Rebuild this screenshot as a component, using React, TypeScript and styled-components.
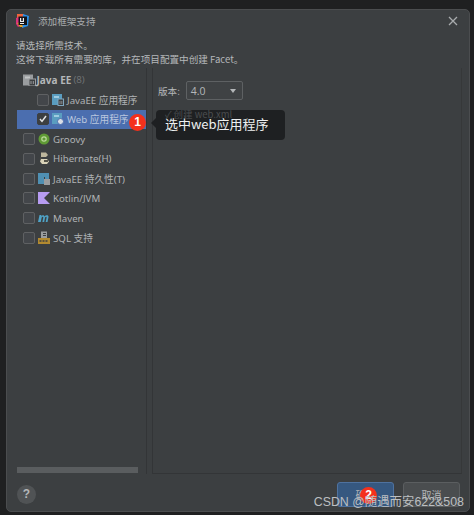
import React from "react";
import styled, { createGlobalStyle } from "styled-components";

const Global = createGlobalStyle`
  html, body { margin: 0; padding: 0; background: #1f2021; }
  body { width: 474px; height: 515px; overflow: hidden; font-family: "Noto Sans CJK SC", "Noto Sans", sans-serif; }
  #root { width: 474px; height: 515px; }
`;

const Page = styled.div`
  position: relative;
  width: 474px;
  height: 515px;
  padding: 9px 4px 3px 6px;
  box-sizing: border-box;
  overflow: hidden;
  background: #1f2021;
`;

const Dialog = styled.div`
  height: 100%;
  box-sizing: border-box;
  display: flex;
  flex-direction: column;
  background: #3c3f41;
  border: 1px solid #4b4d4f;
  border-radius: 5px;
  color: #b4b7b9;
`;

const TitleBar = styled.div`
  height: 22px;
  display: flex;
  align-items: center;
  padding: 0 11px 0 9px;
  gap: 9px;
  font-size: 9.6px;
  color: #a9acae;
  flex: none;
`;

const TitleText = styled.span`
  flex: 1;
`;

const Description = styled.div`
  margin: 6px 0 0 9px;
  font-size: 9.6px;
  line-height: 14px;
  color: #b4b7b9;
  height: 30px;
  flex: none;
`;

const Split = styled.div`
  height: 406px;
  margin: 0 7px 0 9px;
  display: flex;
  flex: none;
`;

const LeftPane = styled.div`
  width: 131px;
  flex: none;
  display: flex;
  flex-direction: column;
  justify-content: space-between;
  border-right: 1px solid #333537;
  padding: 2px 0 1px 1px;
  box-sizing: border-box;
`;

const Tree = styled.div`
  display: flex;
  flex-direction: column;
`;

const Row = styled.div<{ $indent: number; $selected?: boolean }>`
  height: 19.75px;
  display: flex;
  align-items: center;
  gap: 3px;
  padding-left: ${(p) => p.$indent}px;
  font-family: "Noto Sans", "Noto Sans CJK SC", sans-serif;
  font-size: 9.7px;
  white-space: nowrap;
  color: ${(p) => (p.$selected ? "#b9c6de" : "#b0b3b5")};
  background: ${(p) => (p.$selected ? "#4b6eaf" : "transparent")};
`;

const CheckBox = styled.span<{ $checked?: boolean }>`
  width: 10px;
  height: 10px;
  flex: none;
  border: 1px solid ${(p) => (p.$checked ? "#3c3f41" : "#5f6163")};
  border-radius: 2px;
  background: ${(p) => (p.$checked ? "#3c3f41" : "#43464a")};
  display: flex;
  align-items: center;
  justify-content: center;
`;

const GroupName = styled.b`
  color: #b4b7b9;
  font-family: "Open Sans", "Noto Sans CJK SC", sans-serif;
  font-size: 10px;
  margin-left: -2.5px;
`;

const Count = styled.span`
  color: #6f7274;
  margin-left: -1px;
`;

const Scrollbar = styled.div`
  width: 121px;
  height: 6px;
  background: #5a5d5f;
  flex: none;
`;

const Gutter = styled.div`
  width: 5px;
  flex: none;
`;

const RightPane = styled.div`
  flex: 1;
  border-left: 1px solid #333537;
  border-bottom: 1px solid #333537;
  border-right: 1px solid #363839;
  padding: 13px 0 0 5px;
  box-sizing: border-box;
`;

const VersionRow = styled.div`
  display: flex;
  align-items: center;
  gap: 6px;
  font-size: 9.6px;
`;

const Select = styled.div`
  width: 57px;
  height: 19px;
  box-sizing: border-box;
  border: 1px solid #5e6163;
  border-radius: 2px;
  background: #3f4244;
  padding: 0 6px 0 4px;
  display: flex;
  align-items: center;
  justify-content: space-between;
  font-size: 10.5px;
  font-family: "Open Sans", sans-serif;
`;

const Caret = styled.span`
  width: 0;
  height: 0;
  border-left: 3.5px solid transparent;
  border-right: 3.5px solid transparent;
  border-top: 4px solid #b4b7b9;
`;

const Footer = styled.div`
  flex: 1;
  display: flex;
  align-items: center;
  justify-content: space-between;
  padding: 3px 9px 0 10px;
`;

const Help = styled.div`
  width: 19px;
  height: 19px;
  border-radius: 50%;
  background: #505355;
  color: #b4b7b9;
  font: bold 12px "Liberation Sans", sans-serif;
  display: flex;
  align-items: center;
  justify-content: center;
`;

const Buttons = styled.div`
  display: flex;
  gap: 9px;
`;

const Button = styled.div<{ $primary?: boolean }>`
  width: 57px;
  height: 25px;
  box-sizing: border-box;
  border-radius: 3px;
  border: 1px solid ${(p) => (p.$primary ? "#4f729f" : "#5b5e60")};
  background: ${(p) => (p.$primary ? "#365880" : "#4a4d4f")};
  color: #b4b7b9;
  font-size: 10px;
  display: flex;
  align-items: center;
  justify-content: center;
`;

const Tooltip = styled.div`
  position: absolute;
  left: 156px;
  top: 110px;
  width: 129px;
  height: 30px;
  box-sizing: border-box;
  padding-left: 9px;
  border-radius: 4px;
  background: #1e2022;
  color: #eef0f1;
  font-size: 13px;
  line-height: 27px;
  white-space: nowrap;
`;

const TooltipArrow = styled.span`
  position: absolute;
  left: -5px;
  top: 8px;
  width: 0;
  height: 0;
  border-top: 5px solid transparent;
  border-bottom: 5px solid transparent;
  border-right: 5px solid #1e2022;
`;

const GhostText = styled.span`
  position: absolute;
  left: 9px;
  top: -9px;
  font-size: 9.5px;
  color: #4a4d4f;
`;

const Badge = styled.div<{ $x: number; $y: number }>`
  position: absolute;
  left: ${(p) => p.$x}px;
  top: ${(p) => p.$y}px;
  width: 17px;
  height: 17px;
  border-radius: 50%;
  background: #f4311c;
  color: #fff;
  font: bold 12px/17px "Liberation Sans", sans-serif;
  text-align: center;
`;

const Watermark = styled.div`
  position: absolute;
  right: 10px;
  bottom: 5px;
  font-size: 12.4px;
  line-height: 16px;
  color: #bcbfc1;
  font-family: "Liberation Sans", "Noto Sans CJK SC", sans-serif;
  white-space: nowrap;
`;

const CloseIcon = () => (
  <svg width="10" height="10" viewBox="0 0 10 10">
    <path d="M1 1l8 8M9 1l-8 8" stroke="#a9acae" strokeWidth="1.3" />
  </svg>
);

const AppLogo = () => (
  <svg width="13" height="14" viewBox="0 0 13 14">
    <path d="M1 0h7v5H1z" fill="#f0643c" />
    <path d="M0 4l3-1 1 9-2 1-2-3z" fill="#d8337a" />
    <path d="M7 0l6 2-1 10-6 2z" fill="#2b8fe6" />
    <path d="M1 9l3 4h3l-2-5z" fill="#e8a020" />
    <rect x="2.500" y="2.500" width="8.500" height="8.500" fill="#12141a" />
    <rect x="4" y="9" width="4" height="1" fill="#eee" />
    <path d="M4 4h1.200v3h1.600V4H8v4H4z" fill="#eee" />
  </svg>
);

const Check = () => (
  <svg width="8" height="8" viewBox="0 0 8 8">
    <path d="M1 4l2 2.400L7 1" fill="none" stroke="#e4e6e7" strokeWidth="1.500" />
  </svg>
);

const FolderIcon = () => (
  <svg width="13" height="12" viewBox="0 0 13 12">
    <path d="M0 0.500h10v11H0z" fill="#9a9d9f" />
    <path d="M2 2.500h5v2H2z" fill="#c3c5c6" />
    <rect x="6" y="5" width="6.500" height="7" fill="#3c3f41" stroke="#9a9d9f" />
    <path d="M8 7v3M10.300 7v3" stroke="#9a9d9f" />
  </svg>
);

const AppIcon = ({ web }: { web?: boolean }) => (
  <svg width="12" height="12" viewBox="0 0 12 12">
    <path d="M0 0h10v11H0z" fill="#5a9dc0" />
    <path d="M2 2h5v2H2z" fill="#9fcbe0" />
    {web ? (
      <circle cx="8.500" cy="8.500" r="3" fill="#d9dee6" stroke="#4b6eaf" />
    ) : (
      <>
        <rect x="6" y="5" width="5.500" height="6.500" fill="#3c3f41" stroke="#7fa6bd" />
        <path d="M8 7v3M9.800 7v3" stroke="#9a9d9f" strokeWidth="0.800" />
      </>
    )}
  </svg>
);

const PersistIcon = () => (
  <svg width="12" height="12" viewBox="0 0 12 12">
    <path d="M0 0h11v11H0z" fill="#4f90b3" />
    <path d="M6 6h6v6H6z" fill="#9a9d9f" />
    <path d="M6 4h1v2H6z" fill="#3c3f41" />
  </svg>
);

const GroovyIcon = () => (
  <svg width="12" height="12" viewBox="0 0 12 12">
    <circle cx="6" cy="6" r="5.500" fill="#5f9a35" />
    <circle cx="6" cy="6" r="2.200" fill="none" stroke="#bcd99c" strokeWidth="1.200" />
  </svg>
);

const HibernateIcon = () => (
  <svg width="12" height="13" viewBox="0 0 12 13">
    <path d="M3 0.500h5l2 2.500-2 2H3z" fill="#bdb69c" />
    <path d="M2 5l3 1-3 1.500z" fill="#4a4a42" />
    <path d="M3 7h6l2 2.500L9 12H4L2 9.500z" fill="#d8d2b8" />
    <path d="M6 8h4v2H6z" fill="#55544a" />
  </svg>
);

const KotlinIcon = () => (
  <svg width="12" height="12" viewBox="0 0 12 12">
    <path d="M0 0h12L6 6l6 6H0z" fill="#b79cf2" />
  </svg>
);

const MavenIcon = () => (
  <svg width="12" height="12" viewBox="0 0 12 12">
    <path d="M0 10l1.500-7h2L3.200 4.500C4 3 6 2.500 6.600 4.400 7.400 3 10.800 2.400 10.500 5L9.500 10H7.700L8.600 5.500C8.700 4.500 7.400 4.600 7 5.800L6.200 10H4.400L5.300 5.500C5.300 4.500 4 4.600 3.600 5.800L2.800 10z" fill="#4fa3c7" />
  </svg>
);

const SqlIcon = () => (
  <svg width="12" height="13" viewBox="0 0 12 13">
    <path d="M3 0.500h6v6.500H3z" fill="#9a9d9f" />
    <path d="M5 2.500h3M5 4.500h3" stroke="#3c3f41" />
    <rect x="0" y="7" width="12" height="6" fill="#b28a30" />
    <path d="M1.500 10h9" stroke="#3c3f41" strokeWidth="1.600" strokeDasharray="2 1" />
  </svg>
);

const items: { label: string; icon: React.ReactNode }[] = [
  { label: "Groovy", icon: <GroovyIcon /> },
  { label: "Hibernate(H)", icon: <HibernateIcon /> },
  { label: "JavaEE 持久性(T)", icon: <PersistIcon /> },
  { label: "Kotlin/JVM", icon: <KotlinIcon /> },
  { label: "Maven", icon: <MavenIcon /> },
  { label: "SQL 支持", icon: <SqlIcon /> },
];

export default function App() {
  return (
    <Page>
      <Global />
      <Dialog>
        <TitleBar>
          <AppLogo />
          <TitleText>添加框架支持</TitleText>
          <CloseIcon />
        </TitleBar>
        <Description>
          请选择所需技术。
          <br />
          这将下载所有需要的库，并在项目配置中创建 Facet。
        </Description>
        <Split>
          <LeftPane>
            <Tree>
              <Row $indent={6}>
                <FolderIcon />
                <GroupName>Java EE</GroupName>
                <Count>(8)</Count>
              </Row>
              <Row $indent={20}>
                <CheckBox />
                <AppIcon />
                <span>JavaEE 应用程序</span>
              </Row>
              <Row $indent={20} $selected>
                <CheckBox $checked>
                  <Check />
                </CheckBox>
                <AppIcon web />
                <span>Web 应用程序</span>
              </Row>
              {items.map((item) => (
                <Row $indent={6} key={item.label}>
                  <CheckBox />
                  {item.icon}
                  <span>{item.label}</span>
                </Row>
              ))}
            </Tree>
            <Scrollbar />
          </LeftPane>
          <Gutter />
          <RightPane>
            <VersionRow>
              <span>版本:</span>
              <Select>
                4.0
                <Caret />
              </Select>
            </VersionRow>
          </RightPane>
        </Split>
        <Footer>
          <Help>?</Help>
          <Buttons>
            <Button $primary>确定</Button>
            <Button>取消</Button>
          </Buttons>
        </Footer>
      </Dialog>
      <Tooltip>
        <TooltipArrow />
        <GhostText>✓ 创建 web.xml</GhostText>
        选中web应用程序
      </Tooltip>
      <Badge $x={129} $y={114}>1</Badge>
      <Badge $x={360} $y={487}>2</Badge>
      <Watermark>CSDN @随遇而安622&amp;508</Watermark>
    </Page>
  );
}
